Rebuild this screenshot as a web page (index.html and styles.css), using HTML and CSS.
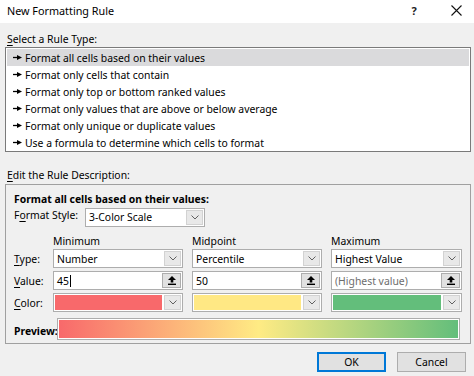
FILE: index.html
```html
<!DOCTYPE html>
<html>
<head>
<meta charset="utf-8">
<title>New Formatting Rule</title>
<link rel="stylesheet" href="styles.css">
</head>
<body>
<div class="titlebar">
  <span class="title">New Formatting Rule</span>
  <span class="help">?</span>
  <span class="close"><svg width="11" height="11" viewBox="0 0 11 11"><path d="M0.5 0.5L10.5 10.5M10.5 0.5L0.5 10.5" stroke="#111" stroke-width="1.1" fill="none"/></svg></span>
</div>
<div class="main">
  <div class="label sel-label"><u>S</u>elect a Rule Type:</div>
  <ul class="rule-list">
    <li class="selected"><svg class="arrow" width="9" height="5" viewBox="0 0 9 5"><path d="M0 2.5H5" stroke="#000" stroke-width="1.3"/><path d="M4 0L9 2.5L4 5Z" fill="#000"/></svg>Format all cells based on their values</li>
    <li><svg class="arrow" width="9" height="5" viewBox="0 0 9 5"><path d="M0 2.5H5" stroke="#000" stroke-width="1.3"/><path d="M4 0L9 2.5L4 5Z" fill="#000"/></svg>Format only cells that contain</li>
    <li><svg class="arrow" width="9" height="5" viewBox="0 0 9 5"><path d="M0 2.5H5" stroke="#000" stroke-width="1.3"/><path d="M4 0L9 2.5L4 5Z" fill="#000"/></svg>Format only top or bottom ranked values</li>
    <li><svg class="arrow" width="9" height="5" viewBox="0 0 9 5"><path d="M0 2.5H5" stroke="#000" stroke-width="1.3"/><path d="M4 0L9 2.5L4 5Z" fill="#000"/></svg>Format only values that are above or below average</li>
    <li><svg class="arrow" width="9" height="5" viewBox="0 0 9 5"><path d="M0 2.5H5" stroke="#000" stroke-width="1.3"/><path d="M4 0L9 2.5L4 5Z" fill="#000"/></svg>Format only unique or duplicate values</li>
    <li><svg class="arrow" width="9" height="5" viewBox="0 0 9 5"><path d="M0 2.5H5" stroke="#000" stroke-width="1.3"/><path d="M4 0L9 2.5L4 5Z" fill="#000"/></svg>Use a formula to determine which cells to format</li>
  </ul>
  <div class="label edit-label"><u>E</u>dit the Rule Description:</div>
  <div class="edit-box">
    <div class="heading">Format all cells based on their values:</div>
    <div class="style-row">
      <span class="style-label">F<u>o</u>rmat Style:</span>
      <div class="combo style-combo">
        <span class="combo-text">3-Color Scale</span>
        <span class="drop"><svg width="8" height="5" viewBox="0 0 8 5"><path d="M0.5 0.5L4 4L7.5 0.5" stroke="#606060" stroke-width="1" fill="none"/></svg></span>
      </div>
    </div>
    <div class="grid">
      <span class="col-head"></span>
      <span class="col-head">Minimum</span>
      <span class="col-head">Midpoint</span>
      <span class="col-head">Maximum</span>

      <span class="row-label"><u>T</u>ype:</span>
      <div class="combo"><span class="combo-text">Number</span><span class="drop"><svg width="8" height="5" viewBox="0 0 8 5"><path d="M0.5 0.5L4 4L7.5 0.5" stroke="#606060" stroke-width="1" fill="none"/></svg></span></div>
      <div class="combo"><span class="combo-text">Percentile</span><span class="drop"><svg width="8" height="5" viewBox="0 0 8 5"><path d="M0.5 0.5L4 4L7.5 0.5" stroke="#606060" stroke-width="1" fill="none"/></svg></span></div>
      <div class="combo"><span class="combo-text">Highest Value</span><span class="drop"><svg width="8" height="5" viewBox="0 0 8 5"><path d="M0.5 0.5L4 4L7.5 0.5" stroke="#606060" stroke-width="1" fill="none"/></svg></span></div>

      <span class="row-label"><u>V</u>alue:</span>
      <div class="valbox"><span class="vtext">45<span class="caret"></span></span><span class="upbtn"><svg width="8" height="9" viewBox="0 0 8 9"><path d="M4 0L8 4H5.3V6.5H2.7V4H0Z" fill="#000"/><rect x="0" y="7.6" width="8" height="1.4" fill="#000"/></svg></span></div>
      <div class="valbox"><span class="vtext">50</span><span class="upbtn"><svg width="8" height="9" viewBox="0 0 8 9"><path d="M4 0L8 4H5.3V6.5H2.7V4H0Z" fill="#000"/><rect x="0" y="7.6" width="8" height="1.4" fill="#000"/></svg></span></div>
      <div class="valbox"><span class="vtext placeholder">(Highest value)</span><span class="upbtn"><svg width="8" height="9" viewBox="0 0 8 9"><path d="M4 0L8 4H5.3V6.5H2.7V4H0Z" fill="#000"/><rect x="0" y="7.6" width="8" height="1.4" fill="#000"/></svg></span></div>

      <span class="row-label"><u>C</u>olor:</span>
      <div class="combo"><span class="swatch red"></span><span class="drop"><svg width="8" height="5" viewBox="0 0 8 5"><path d="M0.5 0.5L4 4L7.5 0.5" stroke="#606060" stroke-width="1" fill="none"/></svg></span></div>
      <div class="combo"><span class="swatch yellow"></span><span class="drop"><svg width="8" height="5" viewBox="0 0 8 5"><path d="M0.5 0.5L4 4L7.5 0.5" stroke="#606060" stroke-width="1" fill="none"/></svg></span></div>
      <div class="combo"><span class="swatch green"></span><span class="drop"><svg width="8" height="5" viewBox="0 0 8 5"><path d="M0.5 0.5L4 4L7.5 0.5" stroke="#606060" stroke-width="1" fill="none"/></svg></span></div>
    </div>
    <div class="preview-row">
      <span class="preview-label">Preview:</span>
      <div class="preview-bar"><div class="gradient"></div></div>
    </div>
  </div>
  <div class="buttons">
    <button class="btn ok">OK</button>
    <button class="btn">Cancel</button>
  </div>
</div>
</body>
</html>
```
FILE: styles.css
```css
* { box-sizing: border-box; margin: 0; padding: 0; }
html, body { width: 474px; height: 376px; overflow: hidden; }
body {
  background: #f0f0f0;
  font-family: "Noto Sans", "Open Sans", sans-serif;
  font-size: 10.4px;
  color: #000;
}
u { text-decoration: underline; text-underline-offset: 1.5px; text-decoration-thickness: 1px; }

.titlebar {
  height: 23px;
  background: #fff;
  display: flex;
  align-items: center;
  padding: 0 8px 2px 7px;
}
.title { flex: 1; font-size: 10.8px; }
.help { width: 14px; text-align: center; font-size: 11px; font-weight: bold; color: #222; }
.close { width: 20px; margin-left: 25px; display: flex; justify-content: center; }

.main { padding: 0 3px 0 5px; }
.label { line-height: 14px; }
.sel-label { margin-top: 9px; margin-bottom: 1px; padding-left: 2px; }
.rule-list {
  list-style: none;
  background: #fff;
  border: 1px solid #7a7a7a;
  padding: 1px 1px 0 1px;
}
.rule-list li {
  height: 17px;
  display: flex;
  align-items: center;
  padding-left: 6px;
  white-space: nowrap;
}
.rule-list li.selected { background: #dadadc; }
.arrow { margin-right: 3px; flex: none; }

.edit-label { margin-top: 16px; margin-bottom: 2px; padding-left: 2px; }
.edit-box {
  border: 1px solid #a0a0a0;
  height: 160px;
  padding: 7px 0 0 8px;
}
.heading { font-weight: bold; line-height: 14px; }
.style-row { display: flex; align-items: center; margin-top: 1px; height: 20px; }
.style-label { width: 71px; margin-top: -4px; }
.style-combo { width: 120px; height: 20px; }

.combo {
  display: flex;
  height: 19px;
  border: 1px solid #adadad;
  background: #fff;
}
.combo-text { flex: 1; padding-left: 3px; display: flex; align-items: center; white-space: nowrap; }
.drop {
  width: 17px;
  margin: 1px;
  background: #e8e8e8;
  border: 1px solid #d2d2d2;
  display: flex;
  align-items: center;
  justify-content: center;
}
.swatch { flex: 1; margin: 1px; }
.red { background: #f8696b; }
.yellow { background: #ffe884; }
.green { background: #63be7b; }

.grid {
  display: grid;
  grid-template-columns: 30px 130px 130px 131px;
  grid-template-rows: 12px 19px 19px 19px;
  column-gap: 9px;
  row-gap: 3px;
  margin-top: 7px;
}
.col-head { line-height: 14px; height: 14px; margin-bottom: -2px; }
.row-label { align-self: center; }

.valbox {
  display: flex;
  height: 19px;
  border: 1px solid #adadad;
  background: #fff;
}
.vtext { flex: 1; padding-left: 3px; display: flex; align-items: center; white-space: nowrap; }
.placeholder { color: #6d6d6d; }
.caret { display: inline-block; width: 1px; height: 12px; background: #000; margin-left: 1px; }
.upbtn {
  width: 19px;
  margin: 1px;
  background: #e1e1e1;
  border: 1px solid #adadad;
  display: flex;
  align-items: center;
  justify-content: center;
}

.preview-row { display: flex; align-items: center; margin-top: 6px; }
.preview-label { width: 43px; font-weight: bold; margin-top: 3px; }
.preview-bar {
  width: 403px;
  height: 22px;
  border: 1px solid #adadad;
  background: #fff;
  padding: 1px;
}
.gradient {
  width: 100%;
  height: 100%;
  background: linear-gradient(to right, #f8696b 0%, #ffeb84 50%, #63be7b 100%);
}

.buttons {
  display: flex;
  justify-content: flex-end;
  gap: 11px;
  margin-top: 8px;
  padding-right: 5px;
}
.btn {
  width: 69px;
  height: 20px;
  background: #e1e1e1;
  border: 1px solid #adadad;
  font: inherit;
  color: #000;
}
.btn.ok { border: 2px solid #0078d7; }
```
